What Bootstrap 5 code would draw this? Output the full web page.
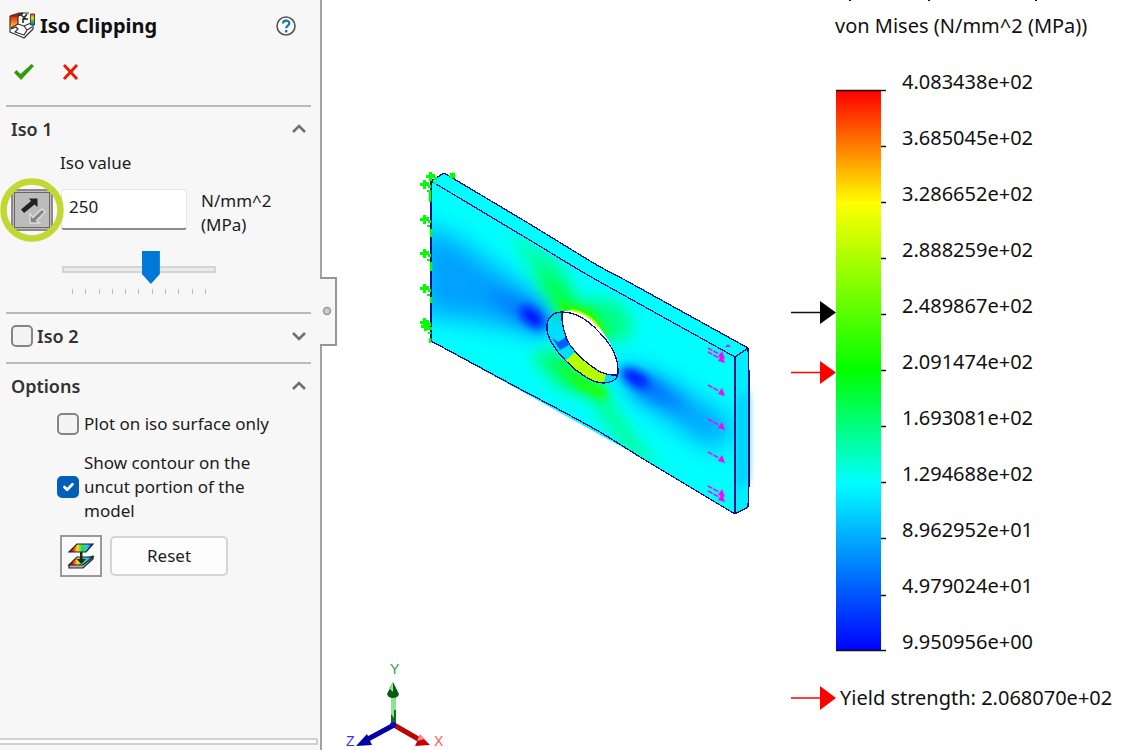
<!DOCTYPE html>
<html lang="en">
<head>
<meta charset="utf-8">
<meta name="viewport" content="width=device-width, initial-scale=1">
<title>Iso Clipping</title>
<link href="https://cdn.jsdelivr.net/npm/bootstrap@5.3.0/dist/css/bootstrap.min.css" rel="stylesheet">
<script src="https://cdn.jsdelivr.net/npm/bootstrap@5.3.0/dist/js/bootstrap.bundle.min.js" defer></script>
<style>
  body { font-family: "Noto Sans", sans-serif; font-size: 17px; line-height: 24px; color: #1c1c1c; background: #fff; }
  .prop-panel { width: 322px; background: #f7f7f7; border-right: 2px solid #a2a2a2; }
  .panel-head { height: 52px; }
  .panel-head h1 { font-size: 20px; font-weight: 700; line-height: 24px; margin: 0; color: #111; }
  .tool-row { height: 40px; padding-left: 14px; margin-bottom: 13px; }
  .rule { height: 2px; background: #b9b9b9; margin: 0 9px 0 6px; flex: none; }
  .sect-head { height: 44px; padding: 0 13px 0 11px; color: #333; }
  .sect-head h2, .sect-head label { font-size: 18px; font-weight: 600; line-height: 24px; margin: 0; }
  .bare { border: 0; background: none; padding: 0; line-height: 0; }
  .indent { padding-left: 60px; }
  .value-row { margin: 14px 0 0 11px; }
  .dir-btn { width: 42px; height: 42px; background: #bcbcbc; border: 2px solid #8b8b8b; padding: 0; position: relative; line-height: 0; }
  .ring { position: absolute; left: -13px; top: -13px; pointer-events: none; z-index: 2; }
  .iso-input { width: 126px; height: 41px; border: 1px solid #e6e6e6; border-bottom: 2px solid #8a8a8a; border-radius: 3px; padding: 0 7px 6px; font-size: 17px; color: #1c1c1c; background: #fff; }
  .unit { padding-left: 14px; }
  .slider-box { width: 154px; margin: 16px 0 18px 62px; }
  .iso-slider { display: block; width: 100%; height: 33px; margin: 0; appearance: none; -webkit-appearance: none; background: none; }
  .iso-slider::-webkit-slider-runnable-track { height: 7px; background: #e7eaea; border: 2px solid #d3d5d5; }
  .iso-slider::-webkit-slider-thumb { -webkit-appearance: none; width: 18px; height: 33px; margin-top: -17px; background: #0078d7; border: 0; border-radius: 0; clip-path: polygon(0 0, 100% 0, 100% 70%, 50% 100%, 0 70%); }
  .scale-ticks { padding: 0 10px; margin-top: 3px; height: 5px; }
  .scale-ticks i { width: 1px; background: #bdbdbd; }
  .box { width: 22px; height: 22px; margin: 0 !important; border: 2px solid #858585; border-radius: 5px !important; background-color: #f4f4f4; flex: none; }
  .box:checked { background-color: #005fb8; border-color: #005fb8; }
  .opt { padding-left: 57px; gap: 5px; margin-bottom: 15px; }
  .opt label { max-width: 192px; }
  .act-row { margin-top: -3px; }
  .map-btn { width: 42px; height: 42px; border: 2px solid #9a9a9a; background: #fafafa; padding: 0; line-height: 0; }
  .reset-btn { width: 118px; height: 40px; border: 2px solid #d4d4d4; border-radius: 5px; background: #fdfdfd; font-size: 17px; padding: 0; color: #1c1c1c; }
  .foot-bar { height: 7px; margin: 0 2px 5px 0; border: 2px solid #cfd1d0; border-left: 0; background: #fff; }
  .grip { position: absolute; left: 320px; top: 277px; width: 17px; height: 69px; background: #f7f7f7; border: 2px solid #969696; border-left: 0; padding: 0; z-index: 3; line-height: 0; }
  .legend { width: 338px; font-size: 20px; color: #111; }
  .legend-title { padding-left: 45px; margin-top: 12px; }
  .legend-body { margin-top: 32px; gap: 16px; }
  .legend-values li { height: 56px; }
</style>
</head>
<body>
<div class="d-flex min-vh-100 position-relative">
  <aside class="prop-panel d-flex flex-column flex-shrink-0">
    <header class="panel-head d-flex align-items-center justify-content-between ps-2 pe-4">
      <div class="d-flex align-items-center gap-1">
        <svg width="28" height="28" viewBox="0 0 28 28" aria-hidden="true">
          <defs>
            <linearGradient id="hot" x1="0" y1="0" x2="0" y2="1"><stop offset="0" stop-color="#d81400"/><stop offset=".4" stop-color="#f4500a"/><stop offset="1" stop-color="#ffe640"/></linearGradient>
            <linearGradient id="rain" x1="0" y1="0" x2="0" y2="1"><stop offset="0" stop-color="#f22"/><stop offset=".35" stop-color="#fd2"/><stop offset=".65" stop-color="#2c3"/><stop offset="1" stop-color="#16c"/></linearGradient>
          </defs>
          <path d="M2 15v5l14 6 9-9v-5l-4 1-4-4h-5l-2 5z" fill="#fff"/>
          <path d="M2 4l9-3h3l-4 3v8l-7 5-1-3z" fill="url(#hot)"/>
          <path d="M2 4h8v8l-7 4M2 4v16l14 6 9-9v-4M10 12l6 2 7-3M3 17l5-2 2 2-3 3 9 3 3-5 5-3M16 14l3 4M2 4l9-3h10" fill="none" stroke="#333" stroke-width="1.200" stroke-linejoin="round"/>
          <path d="M10 4l5-3M13 3l5 4M19 2l-4 5v4M15 7h5" stroke="#222" stroke-width="1.500" fill="none"/>
          <path d="M22.500 2h4v11h-4z" fill="url(#rain)" stroke="#444"/>
        </svg>
        <h1>Iso Clipping</h1>
      </div>
      <button class="bare" type="button" aria-label="Help">
        <svg width="20" height="20" viewBox="0 0 20 20"><circle cx="10" cy="10" r="9" fill="#fafafa" stroke="#555" stroke-width="1.600"/><path d="M7 7.600c0-4 6.300-3.800 6.300-.4 0 2.400-3.100 2.500-3.100 5" fill="none" stroke="#1878ac" stroke-width="2.200"/><path d="M9 14h2.400v2.400H9z" fill="#1878ac"/></svg>
      </button>
    </header>
    <div class="tool-row d-flex align-items-center">
      <button class="bare" type="button" aria-label="OK"><svg width="20" height="18" viewBox="0 0 20 18"><path d="M0 9.500l2.500-2.500 4 4L17.500 1 20 3 7 17z" fill="#2f9c0a"/></svg></button>
      <button class="bare ms-4" type="button" aria-label="Cancel"><svg width="24" height="16" viewBox="0 0 24 16"><path d="M6 1l13 14M19 1L6 15" stroke="#ea1a00" stroke-width="2.800"/></svg></button>
    </div>
    <div class="rule"></div>

    <section>
      <div class="sect-head d-flex align-items-center justify-content-between">
        <h2>Iso 1</h2>
        <button class="bare" type="button" aria-label="Collapse Iso 1"><svg width="16" height="12" viewBox="0 0 16 12"><path d="M2 9l6-6 6 6" fill="none" stroke="#707070" stroke-width="2.600"/></svg></button>
      </div>
      <label for="iso" class="indent d-block">Iso value</label>
      <div class="value-row d-flex">
        <button class="dir-btn" type="button" aria-label="Reverse direction">
          <svg width="38" height="38" viewBox="0 0 38 38"><rect x="1.500" y="1.500" width="35" height="35" fill="none" stroke="#111" stroke-dasharray="1 1"/><path d="M8 18.500L18 10l-2-2.500h8.500V16l-3-2.500L11 22z" fill="#222"/><path d="M29 18L20 26.500l-3-3.500v9h9.500l-3-2.500L32 21z" fill="#858585" stroke="#ddd" stroke-width="1.300"/></svg>
          <svg class="ring" width="64" height="64" viewBox="0 0 64 64"><circle cx="32" cy="32" r="28.500" fill="none" stroke="#bfd832" stroke-width="6.500"/></svg>
        </button>
        <input id="iso" class="iso-input form-control ms-2" type="text" value="250">
        <div class="unit">N/mm^2<br>(MPa)</div>
      </div>
      <div class="slider-box">
        <input class="iso-slider" type="range" min="0" max="100" value="59" aria-label="Iso value slider">
        <div class="scale-ticks d-flex justify-content-between"><i></i><i></i><i></i><i></i><i></i><i></i><i></i><i></i><i></i><i></i><i></i></div>
      </div>
    </section>
    <div class="rule"></div>

    <section class="sect-head d-flex align-items-center justify-content-between mb-1">
      <div class="d-flex align-items-center gap-1">
        <input class="form-check-input box" type="checkbox" id="iso2">
        <label for="iso2">Iso 2</label>
      </div>
      <button class="bare" type="button" aria-label="Expand Iso 2"><svg width="16" height="12" viewBox="0 0 16 12"><path d="M2 3l6 6 6-6" fill="none" stroke="#707070" stroke-width="2.600"/></svg></button>
    </section>
    <div class="rule"></div>

    <section>
      <div class="sect-head d-flex align-items-center justify-content-between">
        <h2>Options</h2>
        <button class="bare" type="button" aria-label="Collapse Options"><svg width="16" height="12" viewBox="0 0 16 12"><path d="M2 9l6-6 6 6" fill="none" stroke="#707070" stroke-width="2.600"/></svg></button>
      </div>
      <div class="opt d-flex align-items-center pt-1">
        <input class="form-check-input box" type="checkbox" id="surf">
        <label for="surf" class="text-nowrap">Plot on iso surface only</label>
      </div>
      <div class="opt d-flex align-items-center">
        <input class="form-check-input box" type="checkbox" id="cont" checked>
        <label for="cont">Show contour on the uncut portion of the model</label>
      </div>
      <div class="act-row indent d-flex align-items-center gap-2">
        <button class="map-btn" type="button" aria-label="Contour on surface">
          <svg width="28" height="28" viewBox="0 0 28 28"><defs><linearGradient id="spec"><stop offset=".15" stop-color="#e11"/><stop offset=".35" stop-color="#fd2"/><stop offset=".55" stop-color="#2d4"/><stop offset=".75" stop-color="#2cf"/><stop offset="1" stop-color="#22c"/></linearGradient></defs>
          <path d="M2 23v3h14l10-9v-3z" fill="#b5b5b5" stroke="#222" stroke-width="1.200"/>
          <path d="M10 15h16l-10 8H2z" fill="url(#spec)" stroke="#222" stroke-width="1.200"/>
          <path d="M10 2h16l-7 8H2z" fill="url(#spec)" stroke="#222" stroke-width="1.200"/>
          <path d="M13 10h2.500v7H19l-4.700 5L9.500 17H13z" fill="#222"/></svg>
        </button>
        <button class="reset-btn" type="button">Reset</button>
      </div>
    </section>
    <div class="foot-bar mt-auto"></div>
  </aside>
  <button class="grip" type="button" aria-label="Hide panel"><svg width="15" height="12" viewBox="0 0 15 12"><circle cx="7" cy="5" r="3.500" fill="#ccc" stroke="#999" stroke-width="1.500"/></svg></button>

  <main class="d-flex flex-grow-1">
    <div class="flex-grow-1 d-flex">
      <svg class="w-100 align-self-end" viewBox="322 0 468 750" font-family="Liberation Sans, sans-serif" role="img" aria-label="Stress plot of a plate with a hole">
        <defs>
          <clipPath id="front"><path d="M431 181L543 248Q575 268 600 282L735 357V514L640 457Q618 443 600 432Q570 415 520 389L431 341z"/></clipPath>
          <clipPath id="bore"><path id="boreEdge" d="M562 312C551 312 546 320 547 330C549 342 557 352 567 362C577 372 592 383 603 383C612 383 619 379 618 370C618 356 609 342 599 332C589 321 576 312 562 312z"/></clipPath>
          <filter id="b3" x="-50%" y="-50%" width="200%" height="200%"><feGaussianBlur stdDeviation="4"/></filter>
          <filter id="b6" x="-50%" y="-50%" width="200%" height="200%"><feGaussianBlur stdDeviation="8"/></filter>
          <filter id="b12" x="-50%" y="-50%" width="200%" height="200%"><feGaussianBlur stdDeviation="13"/></filter>
          <g id="pin"><path d="M0 3h3V0h3v2h3v3h2v3H8V6H6v3H3V6H0zM7 10h3v2H7z" fill="#0f0"/></g>
          <g id="load"><path d="M0 0l11 6" stroke="#f0f" stroke-width="1.500" stroke-dasharray="5 1"/><path d="M14 3l3 8-7-2z" fill="#f0f"/></g>
        </defs>
        <path d="M431 181L444 173L528 223L590 261Q605 270 625 280L748 348L749 374V484L748 507L735 514L640 457L431 341z" fill="#0ff"/>
        <path d="M735 357L748 349L749 374V484L748 507L735 514z" fill="#00eeff"/>
        <path d="M737 400l11-10v90l-11 10z" fill="#00ccff" filter="url(#b3)"/>
        <g clip-path="url(#front)">
          <path d="M425 170h320v350H425z" fill="#0ff"/>
          <path d="M420 225L450 235L550 305L545 335L470 320L420 315z" fill="#00a0ff" filter="url(#b12)"/>
          <path d="M484 288L548 308L547 334Q515 325 484 288z" fill="#0078ff" filter="url(#b6)"/>
          <ellipse cx="532" cy="317" rx="14" ry="7" transform="rotate(40 532 317)" fill="#0010ff" filter="url(#b3)"/>
          <path d="M618 362L670 383L735 425L715 450L635 396z" fill="#0098ff" filter="url(#b12)"/>
          <path d="M620 368L655 380L690 412L640 394z" fill="#0064ff" filter="url(#b6)"/>
          <ellipse cx="635" cy="378" rx="15" ry="7" transform="rotate(30 635 378)" fill="#0018ff" filter="url(#b3)"/>
          <path d="M508 230L560 262L574 292L582 313L553 304L534 276z" fill="#00ffa0" filter="url(#b6)"/>
          <path d="M536 266L558 282L582 313L556 308z" fill="#00ff30" filter="url(#b6)"/>
          <path d="M575 296L618 302L635 325L620 345L608 338z" fill="#00ff80" filter="url(#b6)"/>
          <path d="M556 300L571 304L592 308L612 336L600 336L560 314z" fill="#20ff00" filter="url(#b3)"/>
          <path d="M530 354L555 350L590 378L588 396L560 388z" fill="#00ff60" filter="url(#b6)"/>
          <path d="M575 375L602 385L630 430L665 475L625 450L598 412z" fill="#00ff90" filter="url(#b6)"/>
          <path d="M555 360L590 382L605 386L607 402L580 390z" fill="#20ff00" filter="url(#b3)"/>
        </g>
        <g clip-path="url(#bore)">
          <path d="M540 305h80v80h-80z" fill="#0df"/>
          <path d="M548 317l9-5h6v10z" fill="#00d8a0" filter="url(#b3)"/>
          <path d="M552 338l6 4 8-5 3 8-9 5z" fill="#0060ff"/>
          <path d="M562 364L575 352L590 363L606 375L602 388H590z" fill="#b4ff00"/>
        </g>
        <path d="M562 312L571 310Q585 312 597 324Q606 336 611 345L617 357L618 375Q607 376 597 370Q580 359 570 345Q561 330 562 312z" fill="#fff"/>
        <path d="M571 310Q588 312 599 327" fill="none" stroke="#b4ff00" stroke-width="2"/>
        <g fill="none" stroke="#11118a" stroke-width="1.300" shape-rendering="crispEdges">
          <use href="#boreEdge"/>
          <path d="M562 312Q561 330 570 345Q580 359 597 370Q607 376 618 375"/>
          <path d="M431 181L444 173L528 223L590 261Q605 270 625 280L748 348L749 374V484L748 507L735 514L640 457Q618 443 600 432Q570 415 520 389L431 341M431 181L543 248Q575 268 600 282L735 357L748 348M735 357V514"/>
          <path d="M431 181V341" stroke-width="2"/>
        </g>
        <use href="#pin" x="426" y="172"/><use href="#pin" x="420" y="180"/><use href="#pin" x="420" y="215"/><use href="#pin" x="420" y="249"/><use href="#pin" x="420" y="284"/><use href="#pin" x="420" y="318"/><use href="#pin" x="421" y="322"/>
        <path d="M451 174h3v3h-3zM430 190v12M431 229v8M431 262v9M431 297v6M430 338v5" fill="#0f0" stroke="#0f0" stroke-width="2.500"/>
        <use href="#load" x="708" y="348"/><use href="#load" x="708" y="352"/><use href="#load" x="708" y="385"/><use href="#load" x="708" y="419"/><use href="#load" x="708" y="452"/><use href="#load" x="708" y="486"/><use href="#load" x="708" y="491"/>
        <path d="M725 347l3-3 3 3z" fill="#f0f"/>

        <path d="M391 690h5v35h-5z" fill="#87e68e"/><path d="M391 714l3 4v-8h2v15h-5z" fill="#16691f"/>
        <path d="M393 682l6 12q-1 4-6 4t-6-4z" fill="#0a5c10"/><path d="M393 682l-3 7 3 3z" fill="#91ef98"/>
        <path d="M394 725L420 740" stroke="#b80808" stroke-width="5"/><path d="M420 735l10 10-15 1z" fill="#c80000"/><path d="M420 734l5 5-8 2z" fill="#f98b8b"/>
        <path d="M394 725L368 739" stroke="#0000a5" stroke-width="5"/><path d="M367 734l-11 12 16-1z" fill="#0000a8"/>
        <circle cx="393" cy="725" r="3" fill="#0808c8"/>
        <text x="390" y="674" font-size="14" fill="#2f9c3c">Y</text>
        <text x="434" y="746" font-size="14" fill="#ff5858">X</text>
        <text x="346" y="746" font-size="14" fill="#3434ff">Z</text>
      </svg>
    </div>

    <section class="legend flex-shrink-0">
      <svg class="d-block" width="338" height="2" viewBox="0 0 338 2" aria-hidden="true"><path d="M59 0h2M138 0h2M245 0h2" stroke="#111" stroke-width="2"/></svg>
      <div class="legend-title">von Mises (N/mm^2 (MPa))</div>
      <div class="d-flex legend-body">
        <svg width="96" height="600" viewBox="0 -2 96 600" aria-hidden="true">
          <defs><linearGradient id="scale" x1="0" y1="0" x2="0" y2="1"><stop offset="0" stop-color="#f00"/><stop offset=".2" stop-color="#ff0"/><stop offset=".5" stop-color="#0f0"/><stop offset=".7" stop-color="#0ff"/><stop offset="1" stop-color="#00f"/></linearGradient></defs>
          <rect x="46" y="19" width="45" height="560" fill="url(#scale)"/>
          <path d="M46 18.500h50M91 74.500h5M91 130.500h5M91 186.500h5M91 242.500h5M91 298.500h5M91 354.500h5M91 410.500h5M91 466.500h5M91 523.500h5M46 578.500h50" stroke="#111" stroke-width="1.500"/>
          <path d="M1 240.500h32" stroke="#111" stroke-width="1.500"/><path d="M30 229l16 11.500-16 11.500z" fill="#000"/>
          <path d="M1 300.500h32" stroke="#f00" stroke-width="1.500"/><path d="M30 289l16 11.500-16 11.500z" fill="#f00"/>
        </svg>
        <ul class="list-unstyled m-0 legend-values">
          <li>4.083438e+02</li><li>3.685045e+02</li><li>3.286652e+02</li><li>2.888259e+02</li><li>2.489867e+02</li><li>2.091474e+02</li><li>1.693081e+02</li><li>1.294688e+02</li><li>8.962952e+01</li><li>4.979024e+01</li><li>9.950956e+00</li>
        </ul>
      </div>
      <div class="d-flex align-items-center gap-1 text-nowrap">
        <svg width="46" height="24" viewBox="0 0 46 24" aria-hidden="true"><path d="M1 12h32" stroke="#f00" stroke-width="1.500"/><path d="M30 0l16 12-16 12z" fill="#f00"/></svg>
        <span>Yield strength: 2.068070e+02</span>
      </div>
    </section>
  </main>
</div>
</body>
</html>
